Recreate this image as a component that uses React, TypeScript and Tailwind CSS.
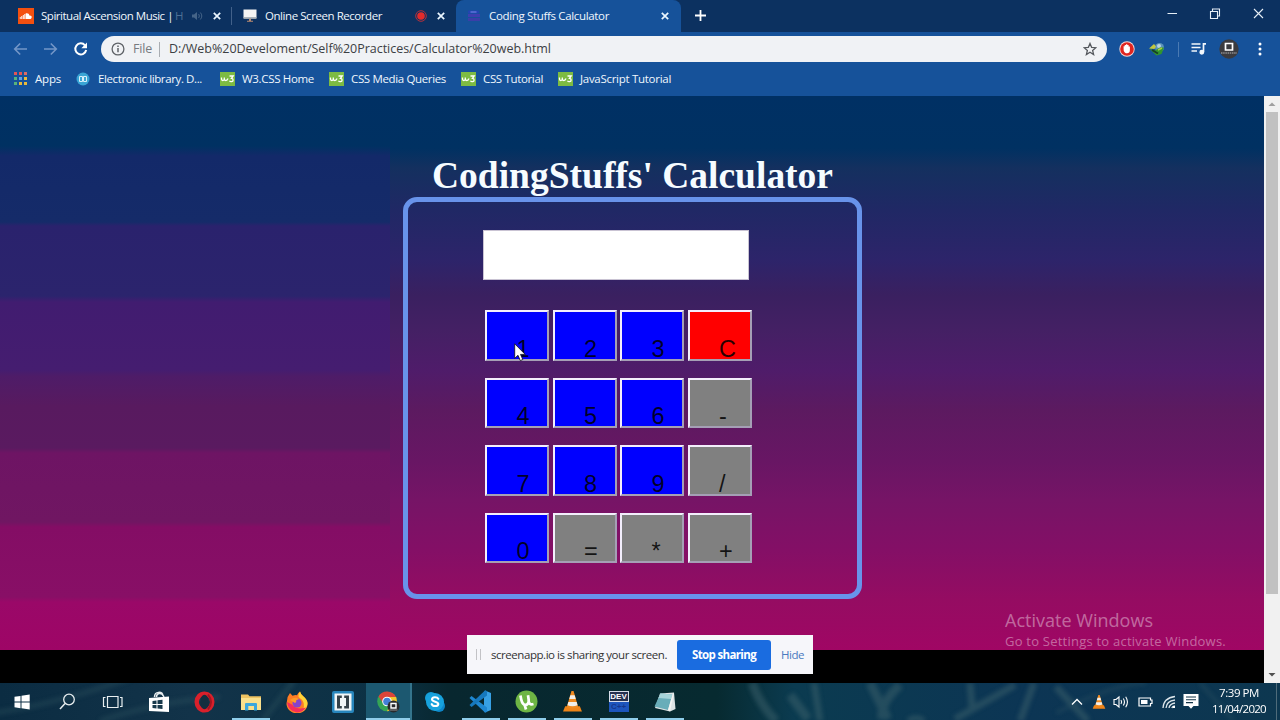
import { useLayoutEffect, useRef, useState } from "react";
import type { ReactNode } from "react";

/** A single line of text whose tracking is adjusted so it fills `width` pixels. */
function Fit({ text, width, className = "" }: { text: string; width: number; className?: string }) {
  const ref = useRef<HTMLSpanElement>(null);
  const [spacing, setSpacing] = useState(0);
  useLayoutEffect(() => {
    if (!ref.current) return;
    const natural = ref.current.getBoundingClientRect().width;
    setSpacing((width - natural) / text.length);
  }, [text, width]);
  return (
    <span ref={ref} className={`inline-block shrink-0 whitespace-pre ${className}`} style={{ letterSpacing: `${spacing}px` }}>
      {text}
    </span>
  );
}

function Close({ className = "" }: { className?: string }) {
  return (
    <svg className={`shrink-0 ${className}`} width="8" height="8" viewBox="0 0 8 8" stroke="#eaf6ff" strokeWidth="1.7">
      <path d="M0.8 0.8 7.2 7.2M7.2 0.8 0.8 7.2" />
    </svg>
  );
}

function TabBar() {
  return (
    <div className="flex h-8 w-full items-stretch bg-[#0c3160] text-[11.5px] text-[#f0f7fd]">
      <div className="flex w-[232px] items-center pl-[18px]">
        <svg width="16" height="16" viewBox="0 0 16 16" className="mr-[7px] shrink-0">
          <rect width="16" height="16" fill="#f4500f" />
          <path d="M2.3 9.2v1.6M3.8 8v3M5.3 7v4M6.8 6v5" stroke="#fff" strokeWidth="1" />
          <path d="M7.6 5.6c1.800-.9 3.500.1 3.800 1.900 1.500-.3 2.400.6 2.300 1.700-.1 1-.8 1.800-1.800 1.800H7.600z" fill="#fff" />
        </svg>
        <Fit text="Spiritual Ascension Music |" width={132} />
        <span className="ml-[2px] w-[9px] text-[#4d6f95]">H</span>
        <svg width="11" height="10" viewBox="0 0 11 10" className="ml-[8px] shrink-0" fill="none" stroke="#456488">
          <path d="M0 3.500h2L5 1v8L2 6.500H0z" fill="#456488" stroke="none" />
          <path d="M6.500 3c1 1 1 3 0 4M8.300 1.500c2 2 2 5 0 7" />
        </svg>
        <Close className="ml-[10px]" />
        <span className="ml-auto h-[18px] w-px bg-[#42618a]" />
      </div>
      <div className="flex w-[224px] items-center pl-[11px]">
        <svg width="14" height="14" viewBox="0 0 14 14" className="mr-2 shrink-0">
          <rect x="0.500" y="0.500" width="13" height="8.500" fill="#f4f4f4" />
          <rect x="0.500" y="8.200" width="13" height="1.800" fill="#9aa3ac" />
          <path d="M6 10h2v2H6zM4 11.800h6v1H4z" fill="#b98a70" />
        </svg>
        <Fit text="Online Screen Recorder" width={117} />
        <svg width="12" height="12" viewBox="0 0 12 12" className="ml-[33px] shrink-0">
          <circle cx="6" cy="6" r="5.300" fill="none" stroke="#b5303c" strokeWidth="1" />
          <circle cx="6" cy="6" r="3.800" fill="#e32b2b" />
        </svg>
        <Close className="ml-[10px]" />
      </div>
      <div className="flex w-[225px] items-center rounded-t-lg bg-[#16529a] pl-[11px]">
        <svg width="14" height="12" viewBox="0 0 14 12" className="mr-2 shrink-0">
          <rect x="1" y="0.500" width="11" height="3" rx="1" fill="#2344b4" />
          <path d="M3.500 2h6" stroke="#7b8ae8" />
          <rect x="1" y="4" width="12" height="3" fill="#3d3fb0" />
          <rect x="1" y="8" width="12" height="3" fill="#3a3fa8" />
        </svg>
        <Fit text="Coding Stuffs Calculator" width={120} />
        <Close className="ml-[52px]" />
      </div>
      <svg width="11" height="11" viewBox="0 0 11 11" className="mt-[10px] ml-[14px]" stroke="#fff" strokeWidth="1.800">
        <path d="M5.500 0v11M0 5.500h11" />
      </svg>
      <svg width="97" height="12" viewBox="0 0 97 12" className="mt-[7px] mr-[16px] ml-auto" fill="none" stroke="#e6eef6" strokeWidth="1.100">
        <path d="M0.500 6.500h9.500M87 2l9 9M96 2l-9 9" />
        <path d="M43.500 4.500h7v7h-7zM45.500 4.500v-2.500h7v7h-2" />
      </svg>
    </div>
  );
}

function Toolbar() {
  return (
    <div className="flex h-[34px] items-center bg-[#16529a] text-[12.5px] text-[#3c4043]">
      <svg width="78" height="16" viewBox="0 0 78 16" className="ml-[13px] shrink-0" fill="none">
        <path d="M14 8H2M7.200 2.500 1.700 8l5.500 5.500M31 8h12M37.800 2.500 43.300 8l-5.500 5.500" stroke="#7396c7" strokeWidth="1.600" />
        <path d="M72 4.300A5.500 5.500 0 1 0 73.200 9" stroke="#fff" strokeWidth="2" />
        <path d="M74 1.500v5.700h-5.700z" fill="#fff" />
      </svg>
      <div className="ml-[10px] flex h-[26px] w-[1006px] items-center rounded-full bg-[#f0f2f5] pl-[10px]">
        <svg width="14" height="14" viewBox="0 0 14 14" fill="none" stroke="#5f6368" strokeWidth="1.300" className="shrink-0">
          <circle cx="7" cy="7" r="5.900" />
          <path d="M7 6v4.200M7 3.500v1.400" strokeWidth="1.500" />
        </svg>
        <Fit text="File" width={19} className="ml-2 text-[#777b80]" />
        <span className="ml-[7px] h-[15px] w-px bg-[#a9adb2]" />
        <Fit text="D:/Web%20Develoment/Self%20Practices/Calculator%20web.html" width={382} className="ml-[9px]" />
        <svg width="14" height="14" viewBox="0 0 24 24" className="mr-[10px] ml-auto" fill="none" stroke="#55595e" strokeWidth="2.200">
          <path d="m12 2.500 2.800 6.700 7.200.6-5.500 4.700 1.700 7-6.200-3.800-6.200 3.800 1.700-7L2 9.800l7.200-.6z" />
        </svg>
      </div>
      <svg width="16" height="16" viewBox="0 0 16 16" className="ml-3 shrink-0">
        <circle cx="8" cy="8" r="7.700" fill="#f4d8d8" />
        <circle cx="8" cy="8" r="6.800" fill="#e0241f" />
        <path d="M4.600 8V5.300h1.100V4h1.300v-.7h1.300V4h1.300v1.500h1.300v3.500c0 2.200-1.100 3.300-2.800 3.300S5.600 11.800 4.800 10z" fill="#fff" />
      </svg>
      <svg width="16" height="14" viewBox="0 0 16 14" className="ml-[14px] shrink-0">
        <circle cx="10.500" cy="5.500" r="4.500" fill="#5b93ba" />
        <circle cx="10" cy="4" r="2" fill="#b8d3df" />
        <path d="M0 6.500 5 2l2 2.500L5.500 7z" fill="#c3c93e" />
        <path d="M0.500 7 6 8.500l5-3 4 0L12.500 12l-5 1.500z" fill="#31952e" />
        <path d="m3 8 6 3.500" stroke="#173f25" strokeWidth="2" />
        <path d="m9 8 4-2" stroke="#a9cc3a" strokeWidth="1.500" />
      </svg>
      <span className="ml-[13px] h-[15px] w-px bg-[#4a7ab3]" />
      <svg width="16" height="14" viewBox="0 0 16 14" className="ml-3 shrink-0" fill="none" stroke="#f2f7fc" strokeWidth="1.700">
        <path d="M0.500 2h9M0.500 5.500h9M0.500 9h5.500M15 1.900h-2.500v8" />
        <circle cx="10.800" cy="10.200" r="1.600" fill="#f2f7fc" />
      </svg>
      <svg width="20" height="20" viewBox="0 0 20 20" className="ml-[12px] shrink-0">
        <circle cx="10" cy="10" r="9.700" fill="#3b3b3f" />
        <path d="M6.500 4.500h7v6.500h-7z" fill="none" stroke="#fff" strokeWidth="1.700" />
        <path d="M2 14h16" stroke="#b5b5b5" strokeWidth="1" strokeDasharray="1.500 .7" />
      </svg>
      <svg width="4" height="14" viewBox="0 0 4 14" className="ml-[19px] shrink-0" fill="#fff">
        <circle cx="2" cy="2" r="1.500" />
        <circle cx="2" cy="7" r="1.500" />
        <circle cx="2" cy="12" r="1.500" />
      </svg>
    </div>
  );
}

function W3() {
  return (
    <svg width="15" height="14" viewBox="0 0 15 14" className="mr-[7px] shrink-0">
      <rect width="15" height="14" fill="#7dbb42" />
      <path d="M1.500 5.500v1.500q0 1.500 1.300 1.500T4.300 7V5.500V7q0 1.500 1.500 1.500T8 6.500M9.500 4h3.700L11.500 6.300c2 0 2.300 3.200 0 3.400-.9.100-1.700-.4-2-1" fill="none" stroke="#fff" strokeWidth="1.300" />
    </svg>
  );
}

const APP_DOTS = ["#e25555", "#e25555", "#d96b63", "#57b37c", "#5fa2e8", "#e8b93c", "#57b37c", "#e8b93c", "#e8b93c"];

function Bookmarks() {
  return (
    <div className="flex h-[30px] items-center bg-[#16529a] pb-[5px] text-[11.5px] text-[#f0f7fd]">
      <div className="mr-2 ml-[14px] grid grid-cols-3 gap-x-[2px] gap-y-[2px]">
        {APP_DOTS.map((c, i) => (
          <span key={i} className="h-[3px] w-[3px]" style={{ backgroundColor: c }} />
        ))}
      </div>
      <Fit text="Apps" width={26} />
      <svg width="14" height="14" viewBox="0 0 14 14" className="mr-[8px] ml-[15px] shrink-0">
        <circle cx="7" cy="7" r="6.500" fill="#3aa5d5" />
        <path d="M3.500 4.500h3v5h-3zM7.500 4.500h3v5h-3z" fill="none" stroke="#d8f0fa" />
      </svg>
      <Fit text="Electronic library. D..." width={104} />
      <span className="w-[18px]" />
      <W3 />
      <Fit text="W3.CSS Home" width={72} />
      <span className="w-[15px]" />
      <W3 />
      <Fit text="CSS Media Queries" width={95} />
      <span className="w-[15px]" />
      <W3 />
      <Fit text="CSS Tutorial" width={60} />
      <span className="w-[15px]" />
      <W3 />
      <Fit text="JavaScript Tutorial" width={91} />
    </div>
  );
}

const KEYS = ["1", "2", "3", "C", "4", "5", "6", "-", "7", "8", "9", "/", "0", "=", "*", "+"];

function keyColor(k: string) {
  if (k === "C") return "bg-[#ff0000]";
  return /\d/.test(k) ? "bg-[#0000ff]" : "bg-[#808080]";
}

function Calculator() {
  return (
    <div className="flex w-[459px] flex-col">
      <h1 className="flex h-[101px] items-end justify-center font-['Liberation_Serif',serif] text-[37.500px] leading-[43px] font-bold text-[#f6fcff]">
        <Fit text="CodingStuffs' Calculator" width={401} />
      </h1>
      <div className="h-[402px] w-full rounded-[14px] border-[5px] border-[#6893ea] pt-[28px] pl-[75px]">
        <div className="h-[50px] w-[266px] border border-[#c9c3d3] bg-white" />
        <div className="mt-[30px] ml-[2.4px] grid w-[267px] grid-cols-[repeat(4,64px)] gap-x-[3.500px] gap-y-[17px]">
          {KEYS.map((k) => (
            <button
              key={k}
              className={`flex h-[50.500px] w-16 items-end border-2 border-t-[#f3eefc] border-r-[#a59fb5] border-b-[#a59fb5] border-l-[#f3eefc] pl-[29px] font-['Liberation_Sans',sans-serif] text-[23.500px] leading-[24px] text-black/85 ${keyColor(k)}`}
            >
              <span className="-mb-[2px]">{k}</span>
            </button>
          ))}
        </div>
      </div>
    </div>
  );
}

function Page() {
  return (
    <div className="flex h-[587px]">
      <div className="relative flex w-[1264px] flex-col bg-black">
        <div className="flex h-[554px] bg-[linear-gradient(180deg,#003064_0px,#003162_52px,#14305f_72px,#202865_114px,#2d246a_164px,#3a2060_199px,#442064_234px,#4f1c6a_274px,#5c1a60_314px,#681664_364px,#761466_404px,#840f66_454px,#950c62_504px,#a00664_554px)]">
          <div className="mr-[13px] w-[390px] bg-[linear-gradient(180deg,#003064_0px,#003162_50px,#132969_60px,#152b69_126px,#2a226d_130px,#2b246d_200px,#411c70_206px,#451d70_274px,#4e1c68_280px,#581a5f_310px,#5a1a60_352px,#6e1464_357px,#701662_426px,#840d65_431px,#880f66_501px,#9a0868_506px,#9e0566_554px)]" />
          <Calculator />
        </div>
        <div className="absolute top-[513px] left-[1005px] flex flex-col font-['Open_Sans',sans-serif] text-white/40">
          <Fit text="Activate Windows" width={148} className="self-start text-[18px] leading-[22px]" />
          <Fit text="Go to Settings to activate Windows." width={221} className="self-start text-[13px] leading-[20px]" />
        </div>
        <div className="absolute top-[539px] left-[467px] flex h-[39px] w-[346px] items-center bg-[#f6f6fa] pl-[9px] text-[11.5px] text-[#333]">
          <span className="mt-[-1px] h-[11px] w-[5px] border-x-[1.500px] border-[#c2c2c6]" />
          <Fit text="screenapp.io is sharing your screen." width={176} className="ml-[10px]" />
          <button className="ml-[10px] flex h-[30px] w-[94px] items-center justify-center rounded-[3px] bg-[#1a6ce0] font-bold text-white">
            <Fit text="Stop sharing" width={64} />
          </button>
          <Fit text="Hide" width={23} className="ml-[10px] text-[#4a7ac0]" />
        </div>
        <svg className="absolute top-[247px] left-[514px]" width="12" height="19" viewBox="0 0 12 19">
          <path d="M.7.800v14.500l3.300-3 2.300 5.300 2.500-1.100-2.300-5.100h4.700z" fill="#fff" stroke="#111" strokeWidth=".8" />
        </svg>
      </div>
      <div className="flex w-4 flex-col items-center bg-[#f1f1f1]">
        <svg width="16" height="16" viewBox="0 0 16 16"><path d="M4.500 10 8 6.500l3.500 3.500z" fill="#a0a0a0" /></svg>
        <div className="h-[482px] w-[12px] bg-[#c1c1c1]" />
        <svg width="16" height="16" viewBox="0 0 16 16" className="mt-auto"><path d="M4.500 6 8 9.500 11.500 6z" fill="#505050" /></svg>
      </div>
    </div>
  );
}

function Task({ children, open = false, active = false }: { children: ReactNode; open?: boolean; active?: boolean }) {
  return (
    <div className={`flex h-[37px] w-[46px] flex-col items-center ${active ? "border-r-2 border-[#34748c] bg-[#1c5870]" : ""}`}>
      <div className="flex h-[35px] items-center pt-[2px]">{children}</div>
      {open && <span className={`h-[2px] bg-[#8fcdea] ${active ? "w-full" : "w-[38px]"}`} />}
    </div>
  );
}

function Vlc({ size }: { size: number }) {
  return (
    <svg width={size} height={size} viewBox="0 0 20 20" className="shrink-0">
      <path d="M3 14.500h14l2 5H1z" fill="#ef8418" />
      <path d="M9 0h2l4.500 15.500q-5.500 2.500-11 0z" fill="#f28a1e" />
      <path d="M7.900 4h4.200l1 3.500H6.900zM6 10.500h8l.8 3.000q-4.800 2-9.600 0z" fill="#f1eee8" />
    </svg>
  );
}

function Taskbar() {
  return (
    <div className="relative h-[37px] overflow-hidden bg-[#0b3042]">
      <svg className="absolute inset-0" width="1280" height="37" viewBox="0 0 1280 37">
        <defs>
          <linearGradient id="tb">
            <stop offset="0" stopColor="#0b2c42" />
            <stop offset=".15" stopColor="#123349" />
            <stop offset=".3" stopColor="#0c3144" />
            <stop offset=".35" stopColor="#08272f" />
            <stop offset=".56" stopColor="#072a30" />
            <stop offset=".62" stopColor="#0b3b50" />
            <stop offset=".8" stopColor="#0c3554" />
            <stop offset="1" stopColor="#0d3750" />
          </linearGradient>
          <filter id="soft" x="-5%" y="-50%" width="110%" height="200%"><feGaussianBlur stdDeviation="2.200" /></filter>
        </defs>
        <rect width="1280" height="37" fill="url(#tb)" />
        <g filter="url(#soft)" fill="none" stroke="#3e626c" opacity=".5">
          <path d="M-5 30Q60 20 130 -5M100 38q60-20 120-24M262 38l32-40" strokeWidth="6" opacity=".5" />
          <path d="M752 0q8 22 24 38M790 12l18 24" strokeWidth="9" />
          <path d="M814 0l6 38" strokeWidth="7" />
          <path d="M870 0l18 36M900 2q-20 18-18 34" strokeWidth="9" />
          <path d="M970 0l2 24M955 36l60-34M1034 0l-14 38M1056 4l32 34" strokeWidth="7" />
          <path d="M1056 30q60-30 90-30M1200 0l34 38" strokeWidth="4" opacity=".5" />
          <path d="M908 38q8-6 16 0" strokeWidth="6" />
        </g>
      </svg>
      <div className="relative flex h-full items-center">
        <div className="flex w-[135.500px] items-center">
          <svg width="122" height="18" viewBox="0 0 122 18" className="ml-[14px] shrink-0" fill="none">
            <path d="M.5 3.700 6.500 2.900v5.600H.5zM7.500 2.700 15.700 1.500v7H7.500zM.5 9.500h6v5.700L.5 14.300zM7.500 9.500h8.200v7L7.500 15.300z" fill="#fff" />
            <circle cx="55" cy="6.500" r="5.300" stroke="#e8eef0" strokeWidth="1.300" />
            <path d="M51 10.500 46 16" stroke="#e8eef0" strokeWidth="1.500" />
            <path d="M93.500 3.500h10.500v11H93.500zM91.500 4.500h-2v9h2M106 4.500h2v9h-2" stroke="#e8eef0" strokeWidth="1.200" />
          </svg>
        </div>
        <Task>
          <svg width="20" height="22" viewBox="0 0 20 22">
            <path d="M5.500 6c0-6 8-6 8.500-1M7.500 6c0-4 5-5 7-1l.5 2" fill="none" stroke="#e9eef0" strokeWidth="1.500" />
            <path d="M0 6.500 20 5v15.500L0 19.500z" fill="#fff" transform="translate(0 .5)" />
            <path d="m3.500 10 4-.5V13h-4zM8.500 9.300 13.500 8.700V13h-5zM3.500 14h4v3.500l-4-.5zM8.500 14h5v4l-5-.5z" fill="#17394b" />
          </svg>
        </Task>
        <Task>
          <svg width="21" height="22" viewBox="0 0 21 22">
            <ellipse cx="10.500" cy="11" rx="7.800" ry="8.300" fill="none" stroke="#d9202b" strokeWidth="4.400" />
            <ellipse cx="10.500" cy="11" rx="4.200" ry="7.300" fill="#142e3f" />
            <path d="M14 3.500q6 7.500 0 15" stroke="#a51420" strokeWidth="2" fill="none" />
          </svg>
        </Task>
        <Task open>
          <svg width="20" height="18" viewBox="0 0 20 18">
            <path d="M0 1.500h7l1.500 1.700H20V16H0z" fill="#eec462" />
            <path d="M0 5h20v12H0z" fill="#fae08c" />
            <path d="M4 17.500V11q0-1 1-1h10q1 0 1 1v6.500h-3V13H7.300v4.500z" fill="#3ba7dc" />
          </svg>
        </Task>
        <Task>
          <svg width="22" height="22" viewBox="0 0 22 22">
            <path d="M4 2 6.500 4.800Q9 3.800 11 4.200 12 1.500 14 .500q.5 2.500 3 4.500 4.500 4 4.500 7.500A10.500 9.500 0 1 1 1 10Q1.300 5 4 2z" fill="#ff7c24" />
            <path d="M14 .500q.5 2.500 3 4.500 5 4 4.500 8-1 5-5 7.500Q21 11 12.500 6 12 3 14 .500z" fill="#ffd338" />
            <path d="M1 11q1 9 10 10.500 6-.3 9-5-9 3-14-3z" fill="#f52c5b" />
            <circle cx="11" cy="12" r="4.500" fill="#8643cc" />
            <path d="M4 9q5-4 9-1l-3 1.500Q11 11 9 12z" fill="#ff9b29" />
          </svg>
        </Task>
        <Task>
          <svg width="22" height="22" viewBox="0 0 22 22">
            <rect width="22" height="22" rx="2" fill="#2786bd" />
            <rect x="2.500" y="2.500" width="17" height="17" fill="#f1f5f6" />
            <path d="M9.800 4.500H5v13h4.800V15H8V7h1.800zM12.200 4.500H17v13h-4.800V15H14V7h-1.800z" fill="#354148" />
          </svg>
        </Task>
        <Task active open>
          <svg width="24" height="22" viewBox="0 0 24 22">
            <circle cx="11" cy="10.500" r="9.800" fill="#35a455" />
            <path d="M2.500 5.500A10 10 0 0 1 20 6H11L8.500 14z" fill="#dd4439" />
            <path d="M11 6h9.200Q23 15 16 19.200l-5 1L14.500 13z" fill="#f5c62e" />
            <circle cx="11" cy="10.500" r="4.800" fill="#fff" />
            <circle cx="11" cy="10.500" r="3.800" fill="#437fd8" />
            <circle cx="17.500" cy="15.500" r="6" fill="#29292c" />
            <path d="M15 12.500h5v4.500h-5z" fill="none" stroke="#fff" strokeWidth="1.400" />
            <path d="M13.500 19h8" stroke="#aaa" strokeWidth=".8" />
          </svg>
        </Task>
        <Task>
          <svg width="22" height="22" viewBox="0 0 22 22">
            <circle cx="7" cy="7" r="6" fill="#159fd9" />
            <circle cx="15" cy="15" r="6" fill="#0d86c8" />
            <circle cx="11" cy="11" r="9" fill="#17a2dd" />
            <path d="M14.300 7.800c-1-2-6-2.200-6.300.4-.1 3 6.500 1.900 6.300 4.900-.3 2.600-5.700 2.600-6.600.1" fill="none" stroke="#fff" strokeWidth="2.100" strokeLinecap="round" />
          </svg>
        </Task>
        <Task open>
          <svg width="23" height="23" viewBox="0 0 23 23">
            <path d="m16 .5 6 2.500v17l-6 2.500-1-1V2z" fill="#37a0e4" />
            <path d="M.5 8 2.500 6 18 17.500v4.500l-2 .5z" fill="#1e87d1" />
            <path d="M.5 15 2.500 17 18 5.500V1L16 .500z" fill="#1678bd" />
          </svg>
        </Task>
        <Task open>
          <svg width="23" height="23" viewBox="0 0 23 23">
            <circle cx="11.500" cy="11.500" r="11" fill="#6eb544" />
            <path d="M5.500 5.500c.6 4 .9 7.500 3.500 9 3 1.300 5-1 4.700-4.500L13 5.300M13.500 10c.3 3.500 1.500 5 5 4M9.500 14.500l1.500 5" fill="none" stroke="#fff" strokeWidth="2.700" />
          </svg>
        </Task>
        <Task open><Vlc size={21} /></Task>
        <Task open>
          <div className="flex h-[21px] w-5 flex-col items-center bg-[#1d55bd] font-['Liberation_Sans',sans-serif] leading-none">
            <span className="h-[11px] w-full border border-[#d8dde9] bg-[#263150] text-center text-[8px] leading-[9px] font-bold text-white">DEV</span>
            <span className="text-[8px] leading-[9px] font-bold text-[#16358a]">C++</span>
          </div>
        </Task>
        <Task open>
          <svg width="22" height="20" viewBox="0 0 22 20">
            <path d="M6 1.500 20 .500 21.500 17 16 19.500 1 16z" fill="#dde3e4" />
            <path d="M6.500 1.500 18.500 2.500 14 18 .500 14.500z" fill="#69adb9" />
            <path d="M6.500 1.500 18.500 2.500 17 7 4.500 6z" fill="#a7d4d9" />
            <path d="M18.500 2.500 14 18l2 1.500L20 1z" fill="#f3f4f3" />
          </svg>
        </Task>
        <div className="ml-auto flex items-center text-white">
          <svg width="12" height="8" viewBox="0 0 12 8" fill="none" stroke="#fff" strokeWidth="1.300"><path d="M1 6.500 6 1.500l5 5" /></svg>
          <span className="ml-[9px]"><Vlc size={14} /></span>
          <svg width="17" height="14" viewBox="0 0 17 14" className="ml-[7px]" fill="none" stroke="#fff" strokeWidth="1.100">
            <path d="M1 4.500h2L6 2v10L3 9.500H1zM8 5q1.300 2 0 4M10.300 3.500q2.300 3.500 0 7M12.700 1.800q3.500 5.200 0 10.400" />
          </svg>
          <svg width="15" height="10" viewBox="0 0 15 10" className="ml-[8px]" fill="none" stroke="#fff" strokeWidth="1.200">
            <path d="M1 1h11.500v2H14v3.500h-1.500V9H1z" />
            <path d="M3 3h6.500v4H3z" fill="#fff" stroke="none" />
          </svg>
          <svg width="14" height="14" viewBox="0 0 14 14" className="ml-[9px]" fill="none" stroke="#dce5ea" strokeWidth="1.300">
            <path d="M1 13Q1.500 3 13 1.500M4 13q.5-7 9-8M7 13q.5-4 6-5M9.800 13q.7-1.800 3-2" />
            <path d="M11 11h2v2h-2z" fill="#fff" stroke="none" />
          </svg>
          <svg width="16" height="17" viewBox="0 0 16 17" className="ml-[7px]">
            <path d="M.5 1h15v12h-5L8 15.800 5.500 13h-5z" fill="#fff" />
            <path d="M3 4h10M3 6.800h10M3 9.600h7" stroke="#143447" strokeWidth="1.100" />
          </svg>
          <div className="ml-[10px] flex w-[60px] flex-col items-center text-[11.5px] leading-4">
            <Fit text="7:39 PM" width={40} className="-mt-px" />
            <Fit text="11/04/2020" width={54} />
          </div>
          <span className="ml-[7px] h-[37px] w-px bg-[#4e6b7a]" />
          <span className="w-[3px]" />
        </div>
      </div>
    </div>
  );
}

export default function App() {
  return (
    <div className="h-[720px] w-[1280px] overflow-hidden bg-black font-['Open_Sans','Noto_Sans',sans-serif]">
      <TabBar />
      <Toolbar />
      <Bookmarks />
      <Page />
      <Taskbar />
    </div>
  );
}
